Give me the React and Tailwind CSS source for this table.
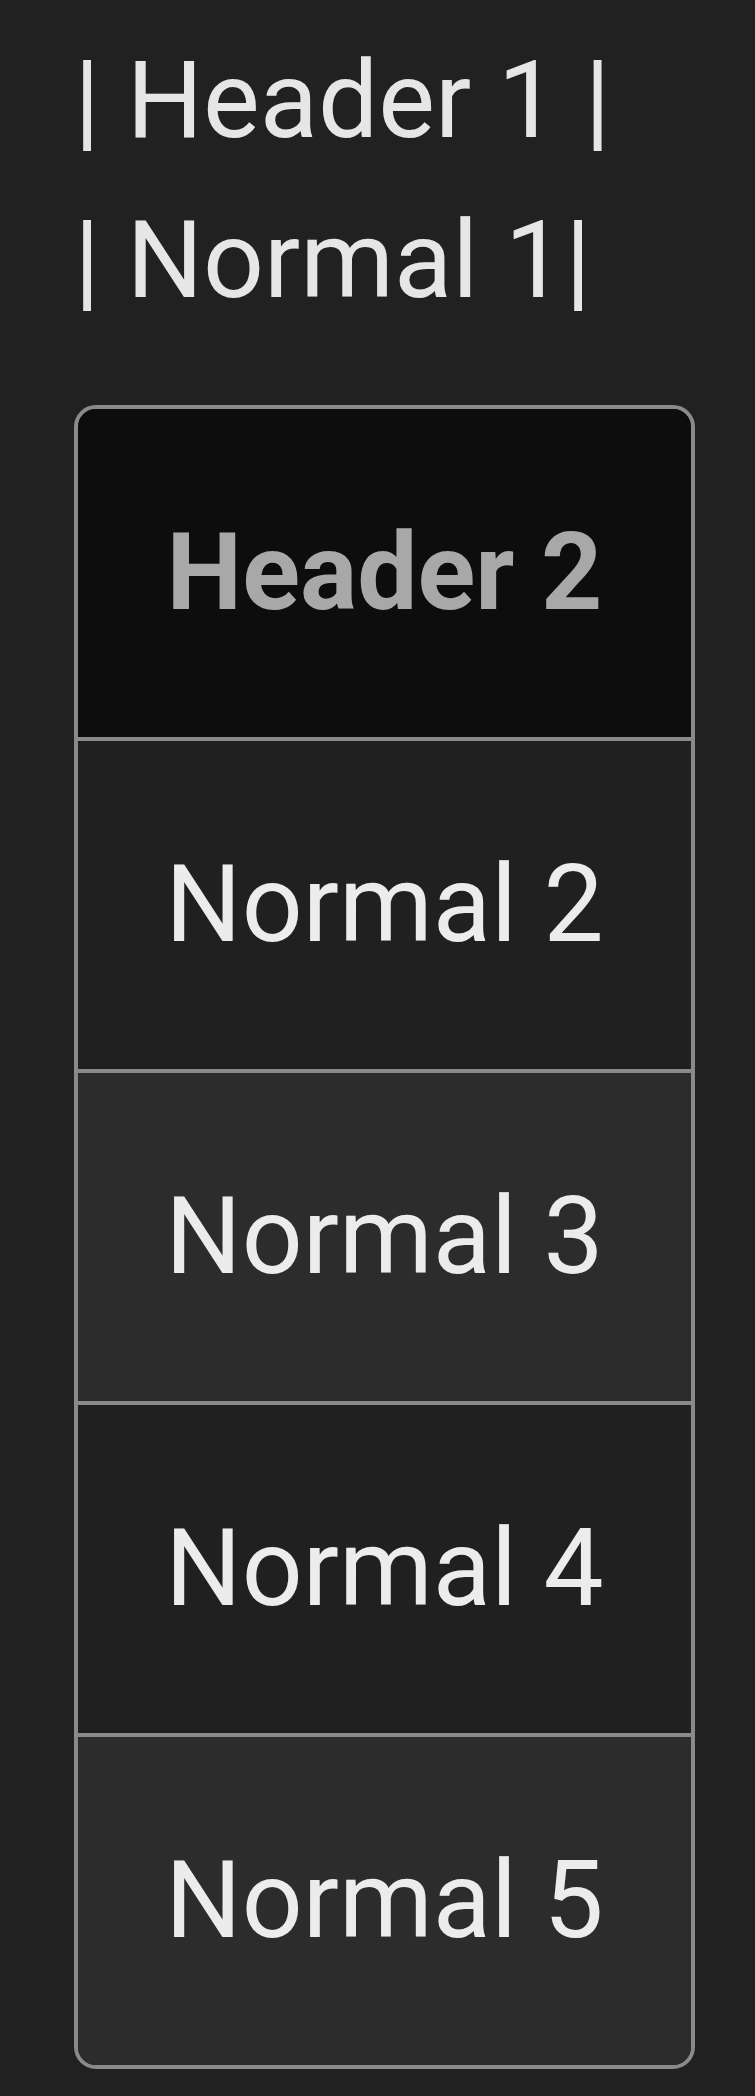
import React from "react";

const rows = ["Normal 2", "Normal 3", "Normal 4", "Normal 5"];

const App = () => {
  return (
    <div className="min-h-[2096px] w-full bg-[#212121] pl-[74px] pt-[21px] font-['Roboto',sans-serif]">
      <p className="text-[107px] leading-[160px] text-[#e6e6e6]">| Header 1 |</p>
      <p className="text-[107px] leading-[160px] text-[#e6e6e6]">| Normal 1|</p>

      {/* table */}
      <div className="mt-[64px] w-[621px] overflow-hidden rounded-[22px] border-[4px] border-[#8a8a8a]">
        <div className="border-b-[4px] border-[#8a8a8a] bg-[#0d0d0d] py-[84px] text-center text-[107px] font-bold leading-[160px] text-[#a8a8a8]">
          Header 2
        </div>
        {rows.map((label, idx) => (
          <div
            key={label}
            className={`py-[84px] text-center text-[107px] leading-[160px] text-[#ececec] ${
              idx % 2 === 0 ? "bg-[#202020]" : "bg-[#2c2c2c]"
            } ${idx < rows.length - 1 ? "border-b-[4px] border-[#8a8a8a]" : ""}`}
          >
            {label}
          </div>
        ))}
      </div>
    </div>
  );
};

export default App;
